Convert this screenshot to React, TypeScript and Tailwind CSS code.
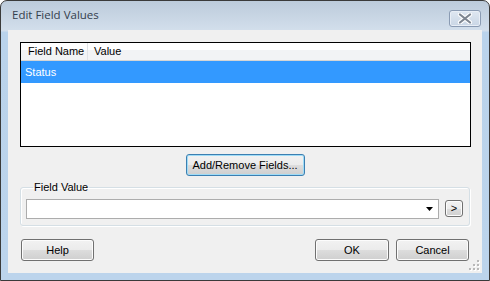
import type { ReactNode } from "react";

const ui = { fontFamily: '"Liberation Sans", Arial, sans-serif' };

function WinButton({
  children,
  className = "",
  focused = false,
}: {
  children: ReactNode;
  className?: string;
  focused?: boolean;
}) {
  return (
    <button
      type="button"
      className={`flex items-center justify-center rounded-[3px] border text-[11px] text-black ${
        focused ? "border-[#3c7fb1] shadow-[inset_0_0_0_1px_#9fdcf7]" : "border-[#707070] shadow-[inset_0_0_0_1px_#fcfcfc]"
      } bg-[linear-gradient(#f2f2f2_0%,#ebebeb_50%,#dddddd_51%,#cfcfcf_100%)] ${className}`}
    >
      {children}
    </button>
  );
}

function CloseGlyph() {
  return (
    <svg width="16" height="11" viewBox="0 0 16 11">
      <path d="M3 1.5 L13 9.5 M13 1.5 L3 9.5" stroke="#ffffff" strokeWidth="4.2" strokeLinecap="round" />
      <path d="M3 1.5 L13 9.5 M13 1.5 L3 9.5" stroke="#7d8591" strokeWidth="2.2" strokeLinecap="round" />
    </svg>
  );
}

function Grip() {
  const dots = [
    [8, 0],
    [8, 4],
    [4, 4],
    [8, 8],
    [4, 8],
    [0, 8],
  ];
  return (
    <svg className="absolute bottom-[2px] right-[2px]" width="11" height="11" viewBox="0 0 11 11">
      {dots.map(([x, y]) => (
        <g key={`${x}-${y}`}>
          <rect x={x + 1} y={y + 1} width="2" height="2" fill="#ffffff" />
          <rect x={x} y={y} width="2" height="2" fill="#b8b8b8" />
        </g>
      ))}
    </svg>
  );
}

export default function App() {
  return (
    <div className="h-[281px] w-[490px] bg-white" style={ui}>
      <div className="flex h-full w-full flex-col rounded-t-[7px] border border-[#3a3a3a] bg-[linear-gradient(#bccbdb_0px,#d3dfec_30px,#bad3eb_31px,#bcd4ec_100%)]">
        {/* title bar */}
        <div className="flex h-[29px] shrink-0 items-start">
          <span
            className="ml-[11px] mt-[6px] text-[11.5px] leading-[16px] text-[#34404d]"
            style={{ fontFamily: '"Open Sans", "Noto Sans", sans-serif' }}
          >
            Edit Field Values
          </span>
          <div className="ml-auto mr-[8px] mt-[9px] flex h-[17px] w-[32px] items-center justify-center rounded-[3px] border border-[#8a9bb3] bg-[linear-gradient(#dfe7f1,#c9d6e5)] shadow-[inset_0_0_0_1px_#e8eef6]">
            <CloseGlyph />
          </div>
        </div>

        {/* client */}
        <div className="mx-[7px] mb-[7px] flex flex-1 flex-col">
          <div className="relative flex flex-1 flex-col bg-[#f0f0f0] pl-[12px] pt-[12px]">
            {/* list view */}
            <div className="flex h-[105px] w-[451px] flex-col border border-black bg-white">
              <div className="flex h-[18px] shrink-0 border-b border-[#d5d5d5] bg-[linear-gradient(#ffffff_0%,#ffffff_40%,#f2f3f5_41%,#f2f3f5_100%)] text-[11px] leading-[17px] text-black">
                <div className="w-[67px] border-r border-[#dfe2e6] pl-[7px]">Field Name</div>
                <div className="pl-[6px]">Value</div>
              </div>
              <div className="h-[22px] bg-[#3399ff] pl-[4px] text-[11px] leading-[22px] text-white">Status</div>
            </div>

            {/* add/remove */}
            <div className="mt-[7px] flex w-[450px] justify-center">
              <WinButton focused className="h-[22px] w-[119px]">
                Add/Remove Fields...
              </WinButton>
            </div>

            {/* group */}
            <fieldset className="mt-[5px] h-[45px] w-[450px] rounded-[3px] border border-[#d5dfe5] px-[5px] shadow-[inset_1px_1px_0_#ffffff,1px_1px_0_#ffffff]">
              <legend className="ml-[7px] px-[1px] text-[11px] leading-[13px] text-black">Field Value</legend>
              <div className="mt-[5px] flex items-start">
                <div className="flex h-[20px] w-[413px] border border-[#acacac] bg-white">
                  <div className="flex-1" />
                  <div className="flex w-[17px] items-center justify-center">
                    <svg width="7" height="4" viewBox="0 0 7 4">
                      <path d="M0 0 H7 L3.5 4 Z" fill="#000" />
                    </svg>
                  </div>
                </div>
                <WinButton className="ml-[6px] mt-[1px] h-[17px] w-[18px] text-[9px]">&gt;</WinButton>
              </div>
            </fieldset>

            {/* bottom buttons */}
            <div className="mt-[13px] flex w-[449px] pl-[1px]">
              <WinButton className="h-[22px] w-[73px]">Help</WinButton>
              <WinButton className="ml-auto h-[22px] w-[74px]">OK</WinButton>
              <WinButton className="ml-[7px] h-[22px] w-[73px]">Cancel</WinButton>
            </div>

            <Grip />
          </div>
        </div>
      </div>
    </div>
  );
}
